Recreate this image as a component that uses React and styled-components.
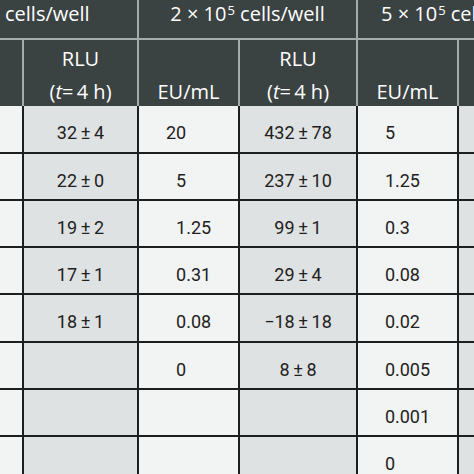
import React from 'react';
import styled, { createGlobalStyle } from 'styled-components';

const GlobalStyle = createGlobalStyle`
  html, body {
    margin: 0;
    padding: 0;
    background: #f2f4f4;
  }
`;

const COLUMNS = '22px 113px 99px 116px 99px 100px';

const Page = styled.div`
  width: 474px;
  height: 474px;
  overflow: hidden;
`;

const HeadGrid = styled.div`
  display: grid;
  grid-template-columns: ${COLUMNS};
  grid-template-rows: 38px 66px;
  gap: 2px;
  width: max-content;
  background: #a4abab;
`;

const GroupCell = styled.div`
  grid-column: span 2;
  display: flex;
  justify-content: ${(p) => p.$align};
  padding: 3px 0 0 ${(p) => p.$indent}px;
  background: #3b4242;
  color: #fff;
  font: 20px/21px 'Open Sans', sans-serif;
  white-space: nowrap;
  overflow: hidden;
`;

const Sup = styled.sup`
  font-size: 0.65em;
  line-height: 0;
  vertical-align: 0.5em;
  margin-left: 1px;
`;

const HeadCell = styled.div`
  display: flex;
  flex-direction: column;
  justify-content: flex-end;
  align-items: center;
  background: #3b4242;
  color: #fff;
  font: 20px/29px 'Open Sans', sans-serif;
  white-space: nowrap;
`;

const HeadLine = styled.span`
  &:not(:last-child) {
    margin-bottom: 4px;
  }
`;

const BodyGrid = styled.div`
  display: grid;
  grid-template-columns: ${COLUMNS};
  grid-template-rows: 46px 45px 45px 45px 46px 45px 45px 45px;
  gap: 2px;
  width: max-content;
  background: #1c1f1f;
`;

const Cell = styled.div`
  display: flex;
  justify-content: center;
  align-items: center;
  padding-top: 7px;
  background: ${(p) => (p.$shaded ? '#dee2e2' : '#f2f4f4')};
  color: #1f2121;
  font: 18px Roboto, sans-serif;
  white-space: nowrap;
`;

const IntPart = styled.span`
  display: inline-block;
  width: ${(p) => p.$w}px;
  text-align: right;
`;

const FracPart = styled.span`
  display: inline-block;
  width: ${(p) => p.$w}px;
  text-align: left;
`;

// decimal alignment per EU/mL column: widths of widest integer / fraction part
const ALIGN = {
  2: { int: 20.3, frac: 25 },
  4: { int: 10.2, frac: 35.2 },
};

const pm = (a, b) => `${a}\u2009±\u2009${b}`;

const rows = [
  ['', pm(32, 4), '20', pm(432, 78), '5', ''],
  ['', pm(22, 0), '5', pm(237, 10), '1.25', ''],
  ['', pm(19, 2), '1.25', pm(99, 1), '0.3', ''],
  ['', pm(17, 1), '0.31', pm(29, 4), '0.08', ''],
  ['', pm(18, 1), '0.08', pm('\u221218', 18), '0.02', ''],
  ['', '', '0', pm(8, 8), '0.005', ''],
  ['', '', '', '', '0.001', ''],
  ['', '', '', '', '0', ''],
];

const Decimal = ({ value, col }) => {
  const [whole, frac] = value.split('.');
  return (
    <>
      <IntPart $w={ALIGN[col].int}>{whole}</IntPart>
      <FracPart $w={ALIGN[col].frac}>{frac !== undefined ? `.${frac}` : ''}</FracPart>
    </>
  );
};

const TimeLabel = () => (
  <HeadLine>
    (<i>t</i>=<span>{'\u20094 h'}</span>)
  </HeadLine>
);

const Density = ({ n }) => (
  <span>
    {n} × 10<Sup>5</Sup> cells/well
  </span>
);

const App = () => (
  <Page>
    <GlobalStyle />
    <HeadGrid>
      <GroupCell $align="flex-start" $indent={5}>cells/well</GroupCell>
      <GroupCell $align="center" $indent={0}><Density n={2} /></GroupCell>
      <GroupCell $align="flex-start" $indent={23}><Density n={5} /></GroupCell>

      <HeadCell />
      <HeadCell>
        <HeadLine>RLU</HeadLine>
        <TimeLabel />
      </HeadCell>
      <HeadCell><HeadLine>EU/mL</HeadLine></HeadCell>
      <HeadCell>
        <HeadLine>RLU</HeadLine>
        <TimeLabel />
      </HeadCell>
      <HeadCell><HeadLine>EU/mL</HeadLine></HeadCell>
      <HeadCell />
    </HeadGrid>
    <BodyGrid>
      {rows.map((row, r) => row.map((value, c) => (
        <Cell key={`${r}-${c}`} $shaded={c % 2 === 1}>
          {ALIGN[c] && value ? <Decimal value={value} col={c} /> : value}
        </Cell>
      )))}
    </BodyGrid>
  </Page>
);

export default App;
